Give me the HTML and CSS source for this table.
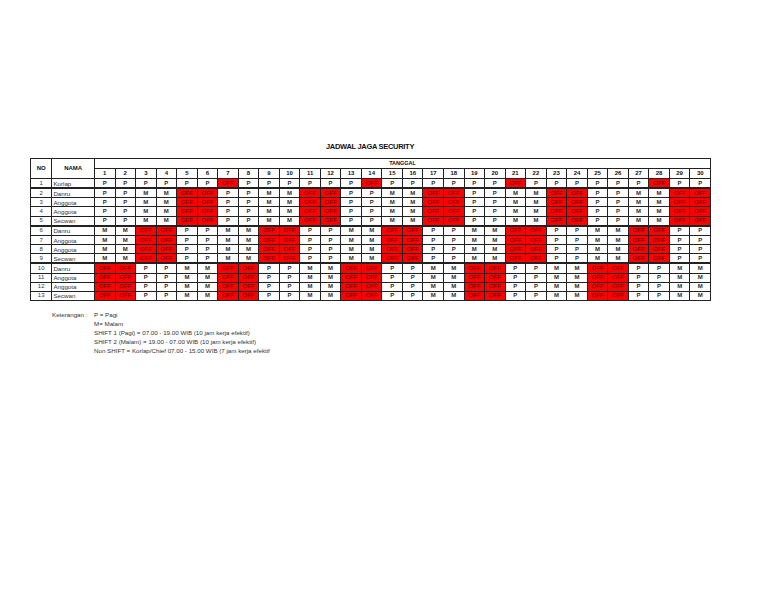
FILE: index.html
```html
<!DOCTYPE html>
<html>
<head>
<meta charset="utf-8">
<title>Jadwal Jaga Security</title>
<link rel="stylesheet" href="styles.css">
</head>
<body>
<div class="page">
  <div class="sheet">
    <div class="title">JADWAL JAGA SECURITY</div>
    <table class="sched">
      <colgroup>
        <col class="c-no"><col class="c-nama">
        <col class="c-day" span="30">
      </colgroup>
      <thead>
        <tr><th rowspan="2" class="h-side">NO</th><th rowspan="2" class="h-side">NAMA</th><th colspan="30" class="tgl">TANGGAL</th></tr>
        <tr class="days"><th>1</th><th>2</th><th>3</th><th>4</th><th>5</th><th>6</th><th>7</th><th>8</th><th>9</th><th>10</th><th>11</th><th>12</th><th>13</th><th>14</th><th>15</th><th>16</th><th>17</th><th>18</th><th>19</th><th>20</th><th>21</th><th>22</th><th>23</th><th>24</th><th>25</th><th>26</th><th>27</th><th>28</th><th>29</th><th>30</th></tr>
      </thead>
      <tbody>
        <tr><td class="no">1</td><td class="nm">Korlap</td><td>P</td><td>P</td><td>P</td><td>P</td><td>P</td><td>P</td><td class="off">OFF</td><td>P</td><td>P</td><td>P</td><td>P</td><td>P</td><td>P</td><td class="off">OFF</td><td>P</td><td>P</td><td>P</td><td>P</td><td>P</td><td>P</td><td class="off">OFF</td><td>P</td><td>P</td><td>P</td><td>P</td><td>P</td><td>P</td><td class="off">OFF</td><td>P</td><td>P</td></tr>
        <tr class="grp"><td class="no">2</td><td class="nm">Danru</td><td>P</td><td>P</td><td>M</td><td>M</td><td class="off">OFF</td><td class="off">OFF</td><td>P</td><td>P</td><td>M</td><td>M</td><td class="off">OFF</td><td class="off">OFF</td><td>P</td><td>P</td><td>M</td><td>M</td><td class="off">OFF</td><td class="off">OFF</td><td>P</td><td>P</td><td>M</td><td>M</td><td class="off">OFF</td><td class="off">OFF</td><td>P</td><td>P</td><td>M</td><td>M</td><td class="off">OFF</td><td class="off">OFF</td></tr>
        <tr><td class="no">3</td><td class="nm">Anggota</td><td>P</td><td>P</td><td>M</td><td>M</td><td class="off">OFF</td><td class="off">OFF</td><td>P</td><td>P</td><td>M</td><td>M</td><td class="off">OFF</td><td class="off">OFF</td><td>P</td><td>P</td><td>M</td><td>M</td><td class="off">OFF</td><td class="off">OFF</td><td>P</td><td>P</td><td>M</td><td>M</td><td class="off">OFF</td><td class="off">OFF</td><td>P</td><td>P</td><td>M</td><td>M</td><td class="off">OFF</td><td class="off">OFF</td></tr>
        <tr><td class="no">4</td><td class="nm">Anggota</td><td>P</td><td>P</td><td>M</td><td>M</td><td class="off">OFF</td><td class="off">OFF</td><td>P</td><td>P</td><td>M</td><td>M</td><td class="off">OFF</td><td class="off">OFF</td><td>P</td><td>P</td><td>M</td><td>M</td><td class="off">OFF</td><td class="off">OFF</td><td>P</td><td>P</td><td>M</td><td>M</td><td class="off">OFF</td><td class="off">OFF</td><td>P</td><td>P</td><td>M</td><td>M</td><td class="off">OFF</td><td class="off">OFF</td></tr>
        <tr><td class="no">5</td><td class="nm">Secwan</td><td>P</td><td>P</td><td>M</td><td>M</td><td class="off">OFF</td><td class="off">OFF</td><td>P</td><td>P</td><td>M</td><td>M</td><td class="off">OFF</td><td class="off">OFF</td><td>P</td><td>P</td><td>M</td><td>M</td><td class="off">OFF</td><td class="off">OFF</td><td>P</td><td>P</td><td>M</td><td>M</td><td class="off">OFF</td><td class="off">OFF</td><td>P</td><td>P</td><td>M</td><td>M</td><td class="off">OFF</td><td class="off">OFF</td></tr>
        <tr class="grp"><td class="no">6</td><td class="nm">Danru</td><td>M</td><td>M</td><td class="off">OFF</td><td class="off">OFF</td><td>P</td><td>P</td><td>M</td><td>M</td><td class="off">OFF</td><td class="off">OFF</td><td>P</td><td>P</td><td>M</td><td>M</td><td class="off">OFF</td><td class="off">OFF</td><td>P</td><td>P</td><td>M</td><td>M</td><td class="off">OFF</td><td class="off">OFF</td><td>P</td><td>P</td><td>M</td><td>M</td><td class="off">OFF</td><td class="off">OFF</td><td>P</td><td>P</td></tr>
        <tr><td class="no">7</td><td class="nm">Anggota</td><td>M</td><td>M</td><td class="off">OFF</td><td class="off">OFF</td><td>P</td><td>P</td><td>M</td><td>M</td><td class="off">OFF</td><td class="off">OFF</td><td>P</td><td>P</td><td>M</td><td>M</td><td class="off">OFF</td><td class="off">OFF</td><td>P</td><td>P</td><td>M</td><td>M</td><td class="off">OFF</td><td class="off">OFF</td><td>P</td><td>P</td><td>M</td><td>M</td><td class="off">OFF</td><td class="off">OFF</td><td>P</td><td>P</td></tr>
        <tr><td class="no">8</td><td class="nm">Anggota</td><td>M</td><td>M</td><td class="off">OFF</td><td class="off">OFF</td><td>P</td><td>P</td><td>M</td><td>M</td><td class="off">OFF</td><td class="off">OFF</td><td>P</td><td>P</td><td>M</td><td>M</td><td class="off">OFF</td><td class="off">OFF</td><td>P</td><td>P</td><td>M</td><td>M</td><td class="off">OFF</td><td class="off">OFF</td><td>P</td><td>P</td><td>M</td><td>M</td><td class="off">OFF</td><td class="off">OFF</td><td>P</td><td>P</td></tr>
        <tr><td class="no">9</td><td class="nm">Secwan</td><td>M</td><td>M</td><td class="off">OFF</td><td class="off">OFF</td><td>P</td><td>P</td><td>M</td><td>M</td><td class="off">OFF</td><td class="off">OFF</td><td>P</td><td>P</td><td>M</td><td>M</td><td class="off">OFF</td><td class="off">OFF</td><td>P</td><td>P</td><td>M</td><td>M</td><td class="off">OFF</td><td class="off">OFF</td><td>P</td><td>P</td><td>M</td><td>M</td><td class="off">OFF</td><td class="off">OFF</td><td>P</td><td>P</td></tr>
        <tr class="grp"><td class="no">10</td><td class="nm">Danru</td><td class="off">OFF</td><td class="off">OFF</td><td>P</td><td>P</td><td>M</td><td>M</td><td class="off">OFF</td><td class="off">OFF</td><td>P</td><td>P</td><td>M</td><td>M</td><td class="off">OFF</td><td class="off">OFF</td><td>P</td><td>P</td><td>M</td><td>M</td><td class="off">OFF</td><td class="off">OFF</td><td>P</td><td>P</td><td>M</td><td>M</td><td class="off">OFF</td><td class="off">OFF</td><td>P</td><td>P</td><td>M</td><td>M</td></tr>
        <tr><td class="no">11</td><td class="nm">Anggota</td><td class="off">OFF</td><td class="off">OFF</td><td>P</td><td>P</td><td>M</td><td>M</td><td class="off">OFF</td><td class="off">OFF</td><td>P</td><td>P</td><td>M</td><td>M</td><td class="off">OFF</td><td class="off">OFF</td><td>P</td><td>P</td><td>M</td><td>M</td><td class="off">OFF</td><td class="off">OFF</td><td>P</td><td>P</td><td>M</td><td>M</td><td class="off">OFF</td><td class="off">OFF</td><td>P</td><td>P</td><td>M</td><td>M</td></tr>
        <tr><td class="no">12</td><td class="nm">Anggota</td><td class="off">OFF</td><td class="off">OFF</td><td>P</td><td>P</td><td>M</td><td>M</td><td class="off">OFF</td><td class="off">OFF</td><td>P</td><td>P</td><td>M</td><td>M</td><td class="off">OFF</td><td class="off">OFF</td><td>P</td><td>P</td><td>M</td><td>M</td><td class="off">OFF</td><td class="off">OFF</td><td>P</td><td>P</td><td>M</td><td>M</td><td class="off">OFF</td><td class="off">OFF</td><td>P</td><td>P</td><td>M</td><td>M</td></tr>
        <tr><td class="no">13</td><td class="nm">Secwan</td><td class="off">OFF</td><td class="off">OFF</td><td>P</td><td>P</td><td>M</td><td>M</td><td class="off">OFF</td><td class="off">OFF</td><td>P</td><td>P</td><td>M</td><td>M</td><td class="off">OFF</td><td class="off">OFF</td><td>P</td><td>P</td><td>M</td><td>M</td><td class="off">OFF</td><td class="off">OFF</td><td>P</td><td>P</td><td>M</td><td>M</td><td class="off">OFF</td><td class="off">OFF</td><td>P</td><td>P</td><td>M</td><td>M</td></tr>
      </tbody>
    </table>
    <div class="ket">
      <div class="ket-label">Keterangan :</div>
      <div class="ket-lines">
        <div>P = Pagi</div>
        <div>M= Malam</div>
        <div>SHIFT 1 (Pagi) = 07.00 - 19.00 WIB (10 jam kerja efektif)</div>
        <div>SHIFT 2 (Malam) = 19.00 - 07.00 WIB (10 jam kerja efektif)</div>
        <div>Non SHIFT = Korlap/Chief 07.00 - 15.00 WIB (7 jam kerja efektif</div>
      </div>
    </div>
  </div>
</div>
</body>
</html>
```

FILE: styles.css
```css
html, body {
  margin: 0;
  background: #ffffff;
}
body {
  font-family: "Liberation Sans", Arial, sans-serif;
  color: #222222;
}
.page {
  padding: 142px 0 0 30px;
}
.sheet {
  width: 680px;
}
.title {
  font-weight: bold;
  font-size: 7.5px;
  letter-spacing: -0.3px;
  line-height: 10px;
  height: 10px;
  text-align: center;
  margin: 0 0 6px 0;
  color: #111111;
}
.sched {
  border-collapse: collapse;
  table-layout: fixed;
  width: 680px;
  font-size: 6px;
}
.c-no { width: 21.4px; }
.c-nama { width: 42.6px; }
.c-day { width: 20.533px; }
.sched th,
.sched td {
  border: 1px solid #222222;
  padding: 0;
  text-align: center;
  vertical-align: middle;
  line-height: 7px;
  white-space: nowrap;
  overflow: hidden;
}
.sched th {
  font-weight: bold;
  color: #111111;
}
.sched thead th {
  height: 9px;
}
.sched .tgl {
  font-weight: bold;
  font-size: 5.5px;
}
.sched td {
  height: 8.17px;
  font-weight: bold;
  color: #2a2a2a;
}
.sched td.no {
  font-weight: normal;
  color: #333333;
}
.sched td.nm {
  text-align: left;
  padding-left: 1px;
  font-weight: normal;
  color: #333333;
  font-size: 6.2px;
}
.sched td.off {
  background: #ff0000;
  color: #5a0000;
  font-weight: normal;
}
.sched tr.grp td {
  border-top-width: 2px;
}
.ket {
  display: flex;
  margin-top: 10px;
  padding-left: 22px;
  font-size: 6.2px;
  line-height: 8.9px;
  color: #333333;
}
.ket-label {
  width: 42px;
  flex: none;
}
```
